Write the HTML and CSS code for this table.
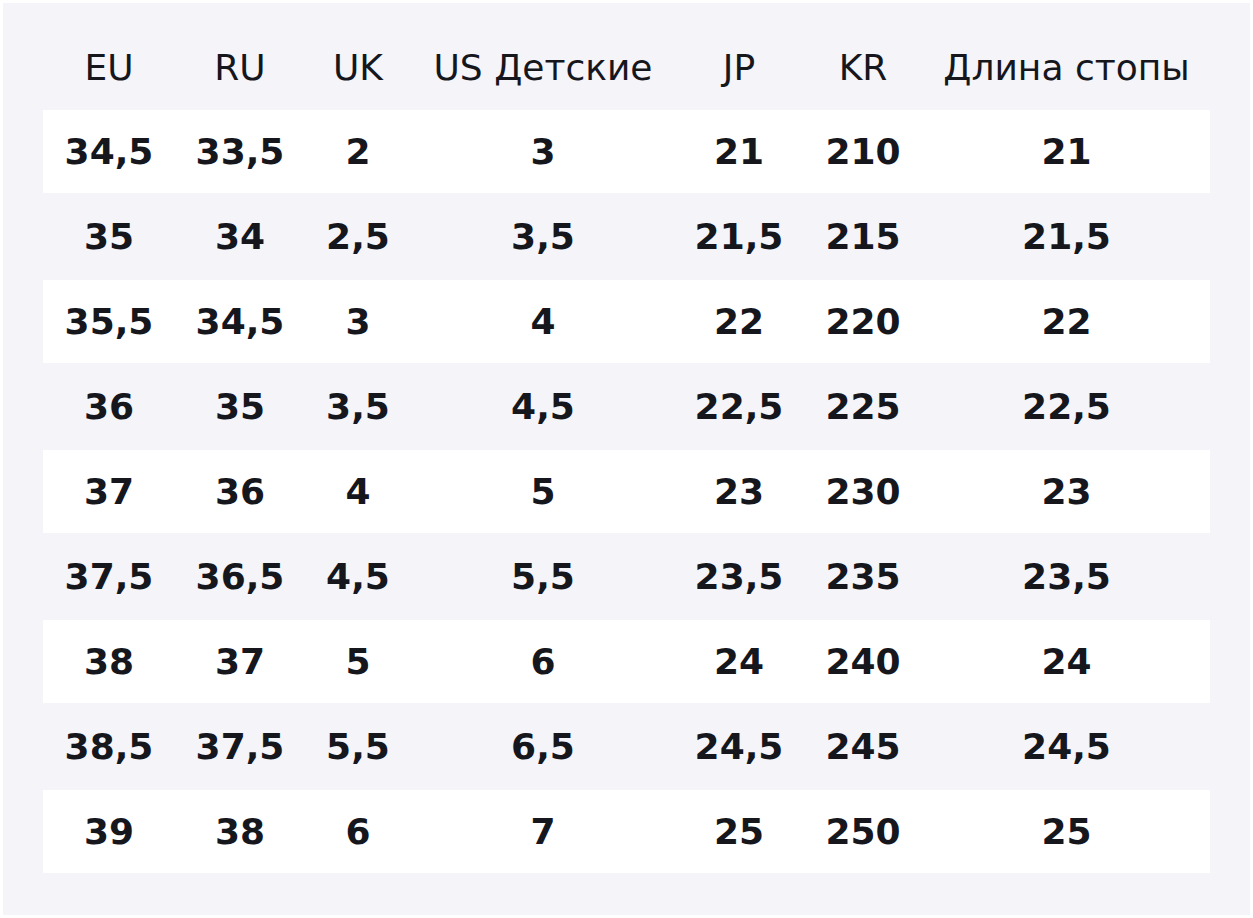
FILE: index.html
```html
<!DOCTYPE html>
<html lang="ru">
<head>
<meta charset="utf-8">
<link rel="stylesheet" href="styles.css">
</head>
<body>
<div class="panel">
<table class="sizes">
<colgroup>
<col class="c1"><col class="c2"><col class="c3"><col class="c4"><col class="c5"><col class="c6"><col class="c7">
</colgroup>
<thead>
<tr><th>EU</th><th>RU</th><th>UK</th><th>US Детские</th><th>JP</th><th>KR</th><th>Длина стопы</th></tr>
</thead>
<tbody>
<tr><td>34,5</td><td>33,5</td><td>2</td><td>3</td><td>21</td><td>210</td><td>21</td></tr>
<tr><td>35</td><td>34</td><td>2,5</td><td>3,5</td><td>21,5</td><td>215</td><td>21,5</td></tr>
<tr><td>35,5</td><td>34,5</td><td>3</td><td>4</td><td>22</td><td>220</td><td>22</td></tr>
<tr><td>36</td><td>35</td><td>3,5</td><td>4,5</td><td>22,5</td><td>225</td><td>22,5</td></tr>
<tr><td>37</td><td>36</td><td>4</td><td>5</td><td>23</td><td>230</td><td>23</td></tr>
<tr><td>37,5</td><td>36,5</td><td>4,5</td><td>5,5</td><td>23,5</td><td>235</td><td>23,5</td></tr>
<tr><td>38</td><td>37</td><td>5</td><td>6</td><td>24</td><td>240</td><td>24</td></tr>
<tr><td>38,5</td><td>37,5</td><td>5,5</td><td>6,5</td><td>24,5</td><td>245</td><td>24,5</td></tr>
<tr><td>39</td><td>38</td><td>6</td><td>7</td><td>25</td><td>250</td><td>25</td></tr>
</tbody>
</table>
</div>
</body>
</html>
```

FILE: styles.css
```css
html, body {
  background: #ffffff;
}
body {
  margin: 3px;
  font-family: "DejaVu Sans", sans-serif;
  color: #16161d;
}
.panel {
  background: #f4f4f9;
  padding: 22px 40px 40px 40px;
  height: 912px;
  box-sizing: border-box;
}
.sizes {
  width: 1167px;
  border-collapse: collapse;
  table-layout: fixed;
}
.c1 { width: 132px; }
.c2 { width: 130px; }
.c3 { width: 106px; }
.c4 { width: 264px; }
.c5 { width: 128px; }
.c6 { width: 120px; }
.c7 { width: 287px; }
.sizes th,
.sizes td {
  padding: 0;
  text-align: center;
  vertical-align: middle;
  font-size: 36px;
  white-space: nowrap;
}
.sizes th {
  height: 85px;
  font-weight: normal;
}
.sizes td {
  height: 87px;
  font-weight: bold;
}
.sizes tbody tr:nth-child(odd) {
  background: #ffffff;
}
.sizes tbody tr:nth-child(odd) td {
  height: 83px;
}
```
